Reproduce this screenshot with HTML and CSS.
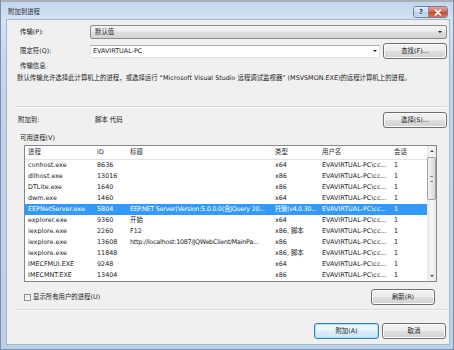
FILE: index.html
```html
<!DOCTYPE html>
<html lang="zh-CN">
<head>
<meta charset="utf-8">
<title>附加到进程</title>
<link rel="stylesheet" href="styles.css">
</head>
<body>
<div class="window">
  <div class="titlebar">
    <span class="title">附加到进程</span>
    <div class="caps">
      <span class="cap cap-help">?</span>
      <span class="cap cap-close"><svg viewBox="0 0 18 11" width="18" height="11"><path d="M6.6 3.2 L11.4 7.8 M11.4 3.2 L6.6 7.8" stroke="#ffffff" stroke-width="1.7" stroke-linecap="round"/></svg></span>
    </div>
  </div>
  <div class="client">
    <div class="frow frow-transport">
      <span class="flabel">传输(P):</span>
      <div class="combo"><span class="ctext">默认值</span><span class="arrow"></span></div>
    </div>
    <div class="frow frow-qualifier">
      <span class="flabel">限定符(Q):</span>
      <div class="textbox"><span class="ttext">EVAVIRTUAL-PC</span><span class="arrow"></span></div>
      <button class="btn btn-side">查找(F)...</button>
    </div>
    <div class="info-title">传输信息</div>
    <div class="info-desc">默认传输允许选择此计算机上的进程，或选择运行 “Microsoft Visual Studio 远程调试监视器” (MSVSMON.EXE)的远程计算机上的进程。</div>
    <div class="sep sep-info"></div>
    <div class="frow frow-attach">
      <span class="flabel flabel-attach">附加到:</span>
      <span class="attach-value">脚本 代码</span>
      <button class="btn btn-side">选择(S)...</button>
    </div>
    <div class="avail-label">可用进程(V)</div>
    <div class="listview">
      <div class="lv-main">
        <div class="lv-row lv-head"><span>进程</span><span>ID</span><span>标题</span><span>类型</span><span>用户名</span><span>会话</span></div>
        <div class="lv-row"><span>conhost.exe</span><span>8636</span><span></span><span>x64</span><span>EVAVIRTUAL-PC\cc...</span><span>1</span></div>
        <div class="lv-row"><span>dllhost.exe</span><span>13016</span><span></span><span>x86</span><span>EVAVIRTUAL-PC\cc...</span><span>1</span></div>
        <div class="lv-row"><span>DTLite.exe</span><span>1640</span><span></span><span>x86</span><span>EVAVIRTUAL-PC\cc...</span><span>1</span></div>
        <div class="lv-row"><span>dwm.exe</span><span>1460</span><span></span><span>x64</span><span>EVAVIRTUAL-PC\cc...</span><span>1</span></div>
        <div class="lv-row lv-selected"><span>EEPNetServer.exe</span><span>5804</span><span class="fit">EEP.NET Server(Version:5.0.0.0(含JQuery 20...</span><span class="fit-tight">托管(v4.0.30...</span><span>EVAVIRTUAL-PC\cc...</span><span>1</span></div>
        <div class="lv-row"><span>explorer.exe</span><span>9360</span><span>开始</span><span>x64</span><span>EVAVIRTUAL-PC\cc...</span><span>1</span></div>
        <div class="lv-row"><span>iexplore.exe</span><span>2260</span><span>F12</span><span>x86, 脚本</span><span>EVAVIRTUAL-PC\cc...</span><span>1</span></div>
        <div class="lv-row"><span>iexplore.exe</span><span>13608</span><span class="fit">http://localhost:1087/JQWebClient/MainPa...</span><span>x86</span><span>EVAVIRTUAL-PC\cc...</span><span>1</span></div>
        <div class="lv-row"><span>iexplore.exe</span><span>11848</span><span></span><span>x86, 脚本</span><span>EVAVIRTUAL-PC\cc...</span><span>1</span></div>
        <div class="lv-row"><span>IMECFMUI.EXE</span><span>9248</span><span></span><span>x64</span><span>EVAVIRTUAL-PC\cc...</span><span>1</span></div>
        <div class="lv-row"><span>IMECMNT.EXE</span><span>13404</span><span></span><span>x86</span><span>EVAVIRTUAL-PC\cc...</span><span>1</span></div>
      </div>
      <div class="vscroll">
        <span class="sb-btn sb-up"></span>
        <span class="sb-thumb"></span>
        <span class="sb-btn sb-down"></span>
      </div>
    </div>
    <div class="checkrow">
      <span class="checkbox"></span>
      <span class="check-label">显示所有用户的进程(U)</span>
      <button class="btn btn-refresh">刷新(R)</button>
    </div>
    <div class="sep sep-bottom"></div>
    <div class="actions">
      <button class="btn btn-default">附加(A)</button>
      <button class="btn btn-cancel">取消</button>
    </div>
  </div>
</div>
</body>
</html>
```

FILE: styles.css
```css
* {
  box-sizing: border-box;
  margin: 0;
  padding: 0;
}

html, body {
  width: 454px;
  height: 350px;
  overflow: hidden;
}

body {
  font-family: "DejaVu Sans", "Noto Sans CJK SC", sans-serif;
  font-size: 6.4px;
  line-height: 10px;
  color: #1b1b1b;
  background: #bcd0ea;
}

.window {
  width: 454px;
  height: 350px;
  display: flex;
  flex-direction: column;
  padding: 0 4px 5px 6px;
  border: 1px solid #7890ad;
  border-top: none;
  background: linear-gradient(to bottom, #a8afb8 0, #a8afb8 2px, #c3d6ee 2px, #d4e2f3 20px, #c2d5ed 70px, #bcd0ea 100%);
}

/* title bar */
.titlebar {
  height: 20px;
  flex: none;
  display: flex;
  align-items: flex-start;
}

.title {
  margin-left: 1px;
  margin-top: 7px;
  line-height: 10px;
  color: #1e2a3a;
}

.caps {
  margin-left: auto;
  margin-right: 1px;
  margin-top: 6px;
  display: flex;
  height: 12px;
  border: 1px solid #6f83a0;
  border-radius: 3px;
  overflow: hidden;
}

.cap {
  height: 10px;
  display: flex;
  align-items: center;
  justify-content: center;
}

.cap-help {
  width: 15px;
  font-size: 7px;
  font-weight: bold;
  color: #2d4b72;
  background: linear-gradient(to bottom, #e4edf8 0%, #cddcef 50%, #b9cde6 51%, #c9dbef 100%);
  border-right: 1px solid #7d90aa;
}

.cap-close {
  width: 18px;
  background: linear-gradient(to bottom, #eaa293 0%, #d66d58 45%, #c8432b 50%, #d8765a 100%);
}

.cap-close svg {
  display: block;
}

/* client */
.client {
  flex: 1;
  background: #f0f0f0;
  padding: 5px 2px 0 13px;
  box-shadow: 0 0 0 1px #a4b7cf;
}

.frow {
  display: flex;
  align-items: center;
}

.frow-transport {
  height: 14px;
}

.frow-qualifier {
  height: 16px;
  margin-top: 4px;
}

.frow-attach {
  height: 16px;
  margin-top: 4px;
}

.flabel {
  width: 70px;
  flex: none;
}

.flabel-attach {
  margin-left: -2px;
  width: 72px;
}

.combo {
  flex: 1;
  height: 14px;
  border: 1px solid #8c8c8c;
  border-radius: 2px;
  background: linear-gradient(to bottom, #f4f4f4 0%, #ececec 45%, #dedede 50%, #d2d2d2 100%);
  display: flex;
  align-items: center;
  padding-left: 4px;
  padding-right: 4px;
}

.arrow {
  margin-left: auto;
  width: 0;
  height: 0;
  border-left: 2px solid transparent;
  border-right: 2px solid transparent;
  border-top: 2px solid #1a1a1a;
}

.textbox {
  width: 290px;
  flex: none;
  height: 13px;
  background: #ffffff;
  border: 1px solid #dfe3ea;
  border-top-color: #abadb3;
  display: flex;
  align-items: center;
  padding-left: 2px;
  padding-right: 2px;
}

.btn {
  font: inherit;
  line-height: 14px;
  height: 16px;
  width: 64px;
  color: #1b1b1b;
  border: 1px solid #707070;
  border-radius: 3px;
  background: linear-gradient(to bottom, #f3f3f3 0%, #ececec 48%, #dfdfdf 50%, #d1d1d1 100%);
  box-shadow: inset 0 0 0 1px #fbfbfb;
  text-align: center;
  flex: none;
}

.btn-side {
  margin-left: auto;
}

.info-title {
  margin-top: 2px;
  height: 10px;
}

.info-desc {
  margin-top: 2px;
  margin-left: -3px;
  height: 10px;
  white-space: nowrap;
}

.sep {
  height: 2px;
  margin-left: -5px;
  border-top: 1px solid #dadada;
  border-bottom: 1px solid #fbfbfb;
}

.sep-info {
  margin-top: 23px;
}

.attach-value {
  margin-left: 5px;
}

.avail-label {
  margin-top: 5px;
  height: 10px;
}

/* list view */
.listview {
  margin-top: 2px;
  margin-left: 4px;
  width: 413px;
  height: 137px;
  border: 1px solid #828790;
  background: #ffffff;
  display: flex;
}

.lv-main {
  width: 402px;
  flex: none;
}

.lv-row {
  display: grid;
  grid-template-columns: 69px 33px 145px 47px 72px 36px;
  height: 11px;
  line-height: 11px;
}

.lv-row span {
  padding-left: 3px;
  white-space: nowrap;
  overflow: hidden;
}

.lv-row .fit {
  letter-spacing: -0.25px;
}

.lv-row .fit-tight {
  letter-spacing: -0.35px;
}

.lv-head {
  height: 14px;
  line-height: 13px;
  border-bottom: 1px solid #e3e3e3;
  color: #2a2a2a;
}

.lv-selected {
  background: #3399ff;
  color: #ffffff;
}

.vscroll {
  flex: 1;
  display: flex;
  flex-direction: column;
  background: linear-gradient(to right, #e9e9e9, #f5f5f5 50%, #e9e9e9);
}

.sb-btn {
  height: 10px;
  display: flex;
  align-items: center;
  justify-content: center;
}

.sb-btn::before {
  content: "";
  width: 0;
  height: 0;
  border-left: 2px solid transparent;
  border-right: 2px solid transparent;
}

.sb-up::before {
  border-bottom: 2px solid #4d4d4d;
}

.sb-down {
  margin-top: auto;
}

.sb-down::before {
  border-top: 2px solid #4d4d4d;
}

.sb-thumb {
  margin-top: 1px;
  height: 43px;
  border: 1px solid #a0a0a0;
  border-radius: 2px;
  background: linear-gradient(to right, #f4f4f4, #e6e6e6 50%, #d8d8d8);
  display: flex;
  align-items: center;
  justify-content: center;
}

.sb-thumb::before {
  content: "";
  width: 3px;
  height: 4px;
  border-top: 1px solid #8a8a8a;
  border-bottom: 1px solid #8a8a8a;
}

/* bottom */
.checkrow {
  margin-top: 7px;
  height: 16px;
  display: flex;
  align-items: center;
}

.checkbox {
  margin-left: 4px;
  width: 7px;
  height: 7px;
  border: 1px solid #8e8f8f;
  background: linear-gradient(to bottom right, #dcdcdc, #f8f8f8);
  box-shadow: inset 0 0 0 1px #f4f4f4;
}

.check-label {
  margin-left: 2px;
}

.btn-refresh {
  margin-left: auto;
  margin-right: 12px;
}

.sep-bottom {
  margin-top: 4px;
}

.actions {
  margin-top: 12px;
  display: flex;
  justify-content: flex-end;
  gap: 3px;
  margin-right: 1px;
}

.btn-default {
  width: 65px;
  border-color: #3c7fb1;
  box-shadow: inset 0 0 0 1px #a6e1fb;
  background: linear-gradient(to bottom, #f1f8fc 0%, #e8f4fb 48%, #dbeef9 50%, #cde7f5 100%);
}
```
